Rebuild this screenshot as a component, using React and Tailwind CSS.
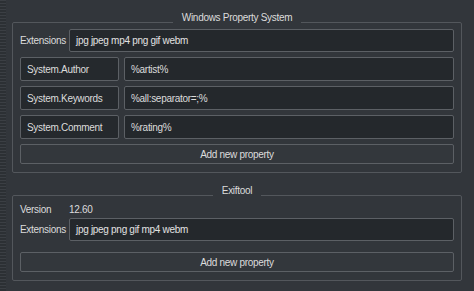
const font = { fontFamily: '"Liberation Sans", Arial, sans-serif' }

const properties = [
  { name: 'System.Author', value: '%artist%' },
  { name: 'System.Keywords', value: '%all:separator=;%' },
  { name: 'System.Comment', value: '%rating%' },
]

const Group = ({ title, children }) => (
  <fieldset className="border border-[#53575c] rounded-[2px] px-[7px] pt-0 pb-[8px] min-w-0">
    <legend className="mx-auto px-[9px] pb-[8px] text-[10px] leading-[6px] text-[#dcdcdc]">{title}</legend>
    {children}
  </fieldset>
)

const AddButton = () => (
  <button className="w-full h-[20px] border border-[#5c6065] rounded-[2px] bg-[#33373c] text-[10px] tracking-[-0.3px] text-[#dcdcdc]">
    Add new property
  </button>
)

const ExtInput = ({ value }) => (
  <div className="h-[23px] flex items-center px-[6px] bg-[#24282c] border border-[#5c6065] rounded-[2px] text-[#e2e2e2]">
    {value}
  </div>
)

export default function App() {
  return (
    <div className="w-[474px] h-[291px] flex bg-[#32363b] text-[10px] tracking-[-0.3px] text-[#dcdcdc] overflow-hidden" style={font}>
      <div className="w-[6px] shrink-0 bg-[repeating-linear-gradient(to_bottom,#3b3f44_0px,#3b3f44_1px,#2c3034_1px,#2c3034_3px)]" />
      <div className="flex-1 pl-[6px] pr-[12px] pt-[15px] flex flex-col gap-[15px]">
        <Group title="Windows Property System">
          <div className="flex flex-col gap-[5px]">
            <div className="grid grid-cols-[49px_1fr] items-center">
              <span>Extensions</span>
              <ExtInput value="jpg jpeg mp4 png gif webm" />
            </div>
            {properties.map((p) => (
              <div key={p.name} className="grid grid-cols-[99px_1fr] gap-[5px] h-[24px]">
                <div className="flex items-center px-[6px] bg-[#25292d] border border-[#5c6065] rounded-[2px]">{p.name}</div>
                <div className="flex items-center px-[6px] bg-[#24282c] border border-[#5c6065] rounded-[2px]">{p.value}</div>
              </div>
            ))}
            <AddButton />
          </div>
        </Group>
        <Group title="Exiftool">
          <div className="flex flex-col">
            <div className="grid grid-cols-[49px_1fr] items-center h-[12px]">
              <span>Version</span>
              <span>12.60</span>
            </div>
            <div className="grid grid-cols-[49px_1fr] items-center mt-[4px]">
              <span>Extensions</span>
              <ExtInput value="jpg jpeg png gif mp4 webm" />
            </div>
            <div className="mt-[11px]">
              <AddButton />
            </div>
          </div>
        </Group>
      </div>
    </div>
  )
}
